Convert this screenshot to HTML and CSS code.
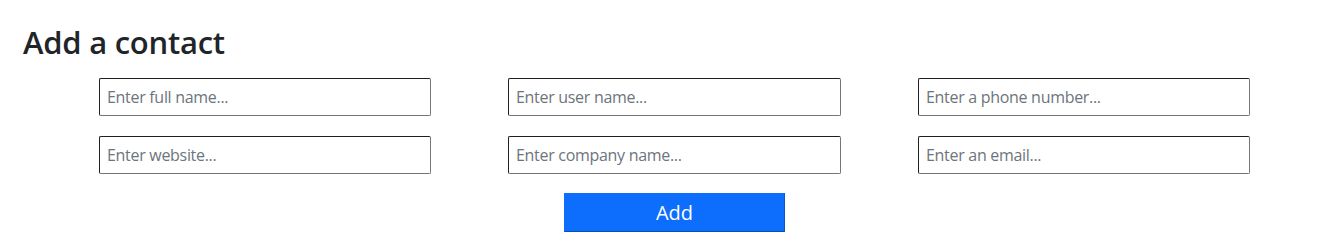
FILE: index.html
```html
<!DOCTYPE html>
<html lang="en">
<head>
<meta charset="utf-8">
<title>Add a contact</title>
<link rel="stylesheet" href="styles.css">
</head>
<body>
<main class="page">
  <h2 class="title">Add a contact</h2>
  <form class="contact-form">
    <div class="fields">
      <input class="field" type="text" placeholder="Enter full name...">
      <input class="field" type="text" placeholder="Enter user name...">
      <input class="field" type="text" placeholder="Enter a phone number...">
      <input class="field" type="text" placeholder="Enter website...">
      <input class="field" type="text" placeholder="Enter company name...">
      <input class="field" type="text" placeholder="Enter an email...">
    </div>
    <div class="actions">
      <button class="add-btn" type="button">Add</button>
    </div>
  </form>
</main>
</body>
</html>
```

FILE: styles.css
```css
* { box-sizing: border-box; }
html, body { margin: 0; padding: 0; background: #fff; }
body {
  font-family: "Open Sans", "Noto Sans", "Liberation Sans", sans-serif;
  color: #212529;
}
.page {
  padding: 24px 0 0 23px;
}
.title {
  margin: 0;
  font-size: 31px;
  line-height: 36px;
  font-weight: 600;
  color: #212529;
  letter-spacing: -0.25px;
}
.contact-form {
  margin-top: 18px;
  padding-left: 76px;
}
.fields {
  display: grid;
  grid-template-columns: 332px 333px 332px;
  column-gap: 77px;
  row-gap: 20px;
}
.field {
  height: 38px;
  width: 100%;
  margin: 0;
  padding: 0 7px;
  font-family: "Open Sans", "Noto Sans", sans-serif;
  font-size: 16px;
  letter-spacing: -0.3px;
  color: #212529;
  background: #fff;
  border: 1px solid #767676;
  border-top-color: #1f1f1f;
  border-left-color: #1f1f1f;
  border-radius: 2px;
  outline: none;
}
.field::placeholder {
  color: #6c757d;
  opacity: 1;
}
.actions {
  display: grid;
  grid-template-columns: 332px 333px 332px;
  column-gap: 77px;
  margin-top: 19px;
}
.add-btn {
  grid-column: 2;
  justify-self: center;
  width: 221px;
  height: 39px;
  margin: 0;
  padding: 0;
  font-family: inherit;
  font-size: 20px;
  color: #fff;
  background: #0d6efd;
  border: 1px solid #0d6efd;
  border-right-color: #0a58ca;
  border-bottom-color: #0a4fb5;
  border-radius: 0;
  cursor: pointer;
}
```
